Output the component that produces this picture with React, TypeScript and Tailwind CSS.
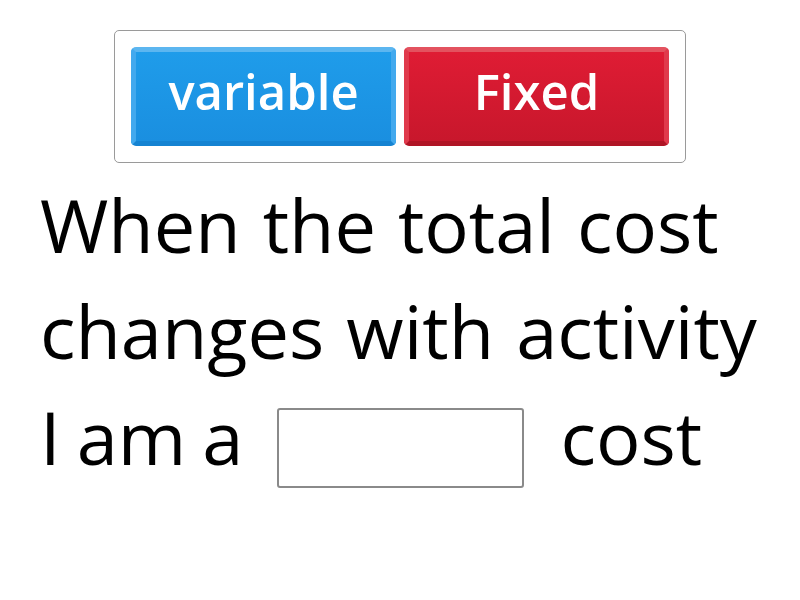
export default function App() {
  return (
    <div className="w-[800px] h-[600px] bg-white font-['Open_Sans',sans-serif] text-black overflow-hidden">
      <div className="flex justify-center pt-[30px]">
        <div className="flex gap-2 p-4 border border-[#9a9a9a] rounded-[5px] bg-white">
          <div className="w-[265px] h-[99px] rounded-[5px] border-[5px] border-t-[#5cb6f0] border-x-[#42a9ee] border-b-[#1583d2] bg-gradient-to-b from-[#1f9cea] to-[#1a8fe0] flex items-center justify-center">
            <span className="text-white text-[49px] font-semibold leading-none pb-[11px]">variable</span>
          </div>
          <div className="w-[265px] h-[99px] rounded-[5px] border-[5px] border-t-[#e3525f] border-x-[#e03a4c] border-b-[#b01425] bg-gradient-to-b from-[#df1c34] to-[#c8172c] flex items-center justify-center">
            <span className="text-white text-[49px] font-semibold leading-none pb-[11px]">Fixed</span>
          </div>
        </div>
      </div>
      <div className="pl-[40px] pr-4 mt-[9px] text-[74px] leading-[106px]">
        <div className="flex gap-x-[22px]">
          <span>When</span>
          <span>the</span>
          <span>total</span>
          <span>cost</span>
        </div>
        <div className="flex gap-x-[22px]">
          <span>changes</span>
          <span>with</span>
          <span>activity</span>
        </div>
        <div className="flex items-center">
          <span className="flex gap-x-[16px]">
            <span>I</span>
            <span>am</span>
            <span>a</span>
          </span>
          <div className="ml-[34px] mr-[36px] w-[247px] h-[80px] border-2 border-[#8a8a8a] rounded-[3px] mt-[21px]"></div>
          <span>cost</span>
        </div>
      </div>
    </div>
  );
}
